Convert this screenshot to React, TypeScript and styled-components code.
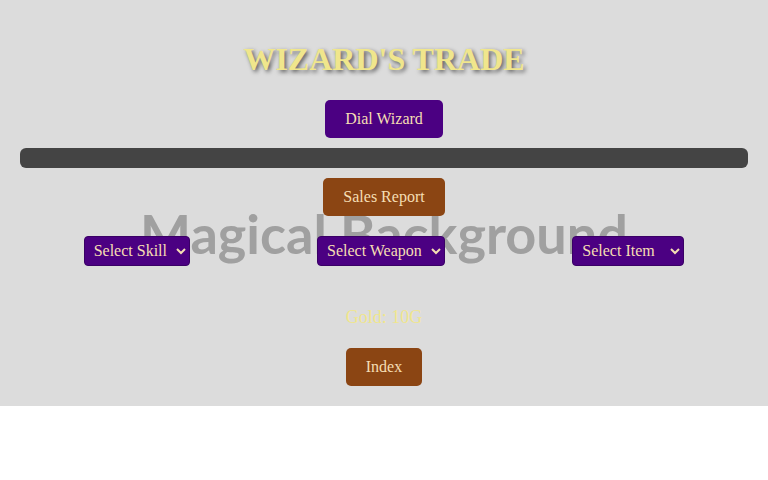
import React, { useState } from "react";
import styled, { createGlobalStyle } from "styled-components";

const GlobalStyle = createGlobalStyle`
    body {
        margin: 0;
        background: #ffffff;
        font-family: "Liberation Serif", "Times New Roman", serif;
    }
`;

const gold = "#f0e68c";
const wheat = "#f5deb3";

const Shop = styled.div`
    position: relative;
    background: #dcdcdc;
    padding: 20px;
    text-align: center;
`;

const Title = styled.h1`
    margin: 21.44px 0;
    font-size: 32px;
    line-height: 37px;
    font-weight: bold;
    color: ${gold};
    text-shadow: 2px 2px 4px rgba(0, 0, 0, 0.6);
`;

const Backdrop = styled.div`
    position: absolute;
    left: 0;
    right: 0;
    top: 201px;
    font-family: Lato, "Liberation Sans", sans-serif;
    font-size: 54px;
    font-weight: 700;
    line-height: 66px;
    color: #a0a0a0;
    pointer-events: none;
`;

const Button = styled.button<{ $tone: "purple" | "brown" }>`
    position: relative;
    display: inline-block;
    padding: 10px 20px;
    border: none;
    border-radius: 5px;
    font-family: "Liberation Serif", "Times New Roman", serif;
    font-size: 16px;
    line-height: 18px;
    color: ${wheat};
    background: ${(p) => (p.$tone === "purple" ? "#4b0082" : "#8b4513")};
    cursor: pointer;
`;

const ProgressTrack = styled.div`
    height: 20px;
    margin: 10px 0;
    border-radius: 6px;
    background: #444444;
`;

const Pickers = styled.div`
    position: relative;
    display: flex;
    justify-content: space-around;
    align-items: center;
    margin-top: 20px;
`;

const Picker = styled.select<{ $width: number }>`
    width: ${(p) => p.$width}px;
    height: 30px;
    padding: 0 5px;
    border: 1px solid #3a0066;
    border-radius: 4px;
    background: #4b0082;
    color: ${wheat};
    font-family: "Liberation Serif", "Times New Roman", serif;
    font-size: 16px;
`;

const GoldLine = styled.p`
    margin: 41px 0 20px;
    font-size: 18px;
    line-height: 21px;
    color: ${gold};
`;

export default function App() {
    const [gold, setGold] = useState(10);

    return (
        <>
            <GlobalStyle />
            <Shop>
                <Title>WIZARD'S TRADE</Title>
                <Button $tone="purple" onClick={() => setGold(gold + 1)}>
                    Dial Wizard
                </Button>
                <ProgressTrack />
                <Backdrop>Magical Background</Backdrop>
                <Button $tone="brown">Sales Report</Button>
                <Pickers>
                    <Picker $width={106} defaultValue="">
                        <option value="">Select Skill</option>
                        <option>Fireball</option>
                        <option>Frost</option>
                    </Picker>
                    <Picker $width={128} defaultValue="">
                        <option value="">Select Weapon</option>
                        <option>Staff</option>
                        <option>Wand</option>
                    </Picker>
                    <Picker $width={112} defaultValue="">
                        <option value="">Select Item</option>
                        <option>Potion</option>
                        <option>Scroll</option>
                    </Picker>
                </Pickers>
                <GoldLine>Gold: {gold}G</GoldLine>
                <Button $tone="brown">Index</Button>
            </Shop>
        </>
    );
}
